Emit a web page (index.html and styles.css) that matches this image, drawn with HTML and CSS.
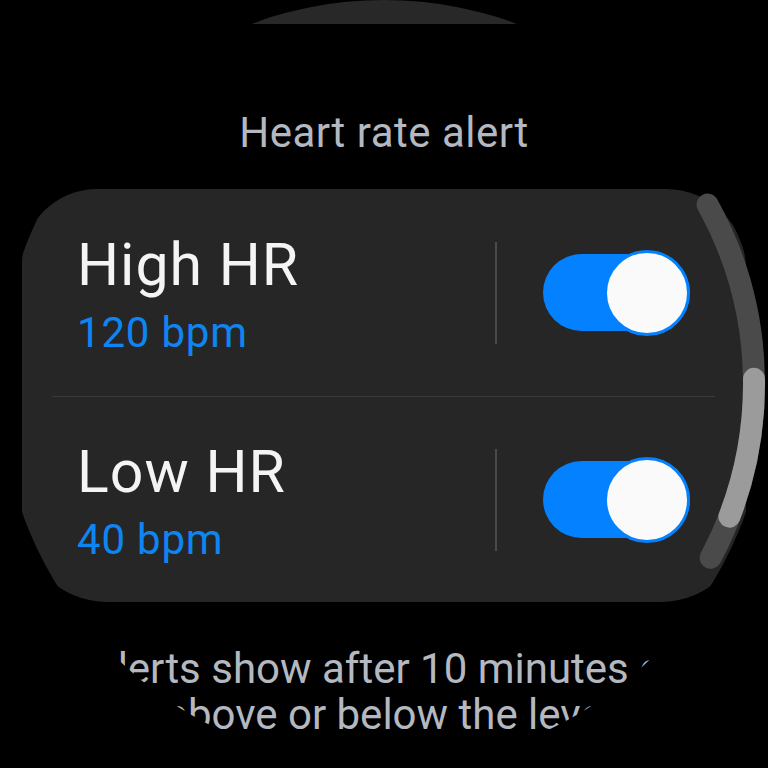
FILE: index.html
```html
<!DOCTYPE html>
<html lang="en">
<head>
<meta charset="utf-8">
<title>Heart rate alert</title>
<link rel="stylesheet" href="styles.css">
</head>
<body>
<div class="screen">
  <div class="top-cap">
    <svg width="265" height="24" viewBox="0 0 265 24"><path d="M0 24 A339 339 0 0 1 265 24 Z" fill="#282828"/></svg>
  </div>
  <h1 class="title">Heart rate alert</h1>
  <div class="card">
    <div class="row row-first">
      <div class="label">
        <div class="name">High HR</div>
        <div class="value">120 bpm</div>
      </div>
      <div class="divider"></div>
      <div class="switch"><div class="knob"></div></div>
    </div>
    <div class="sep"></div>
    <div class="row row-second">
      <div class="label">
        <div class="name">Low HR</div>
        <div class="value">40 bpm</div>
      </div>
      <div class="divider"></div>
      <div class="switch"><div class="knob"></div></div>
    </div>
  </div>
  <p class="note"><span class="line">Alerts show after 10 minutes of</span><span class="line line-second">above or below the level</span></p>
</div>
<svg class="scrollbar" width="768" height="768" viewBox="0 0 768 768">
  <path d="M707.6 204.6 A370 370 0 0 1 710.7 557.7" fill="none" stroke="#4a4a4a" stroke-width="22" stroke-linecap="round"/>
  <path d="M754 378.8 A370 370 0 0 1 729.4 516.6" fill="none" stroke="#9b9b9b" stroke-width="22" stroke-linecap="round"/>
</svg>
</body>
</html>
```

FILE: styles.css
```css
* {
  box-sizing: border-box;
  margin: 0;
  padding: 0;
}

html,
body {
  background: #000;
}

body {
  position: relative;
  width: 768px;
  height: 768px;
  overflow: hidden;
  font-family: Roboto, "Liberation Sans", sans-serif;
}

.screen {
  width: 768px;
  height: 768px;
  clip-path: circle(384px at 384px 384px);
  display: flex;
  flex-direction: column;
  align-items: center;
}

.top-cap {
  flex: none;
  width: 265px;
  height: 24px;
}

.top-cap svg {
  display: block;
}

.title {
  margin-top: 85px;
  font-size: 42px;
  line-height: 48px;
  font-weight: 400;
  color: #b3b8c1;
  letter-spacing: 0.5px;
  white-space: nowrap;
}

.card {
  flex: none;
  margin-top: 32px;
  width: 724px;
  background: #262626;
  border-radius: 75px 80px 85px 85px;
}

.row {
  display: flex;
  align-items: center;
  padding: 0 56px 0 55px;
}

.row-first {
  height: 207px;
}

.row-second {
  height: 205px;
}

.label {
  flex: 1;
  padding-top: 5px;
  white-space: nowrap;
}

.name {
  font-size: 59px;
  line-height: 64px;
  letter-spacing: 1px;
  color: #f4f4f4;
}

.value {
  margin-top: 12px;
  font-size: 42px;
  line-height: 48px;
  letter-spacing: 0.8px;
  color: #0d86f4;
}

.divider {
  flex: none;
  width: 2px;
  height: 102px;
  background: #4a4a4a;
}

.switch {
  flex: none;
  margin-left: 46px;
  width: 147px;
  height: 77px;
  border-radius: 39px;
  background: #0381fe;
  display: flex;
  align-items: center;
  justify-content: flex-end;
}

.knob {
  flex: none;
  width: 86px;
  height: 86px;
  border-radius: 50%;
  background: #fafafa;
  border: 3px solid #0381fe;
}

.sep {
  height: 1px;
  margin: 0 31px 0 30px;
  background: #3a3a3a;
}

.note {
  align-self: stretch;
  margin-top: 44px;
  font-size: 42px;
  line-height: 46px;
  color: #b3b8c1;
  text-align: center;
  white-space: nowrap;
  clip-path: circle(383px at 384px -262px);
}

.line {
  display: block;
}

.line-second {
  padding-left: 10px;
}

.scrollbar {
  position: absolute;
  left: 0;
  top: 0;
}
```
